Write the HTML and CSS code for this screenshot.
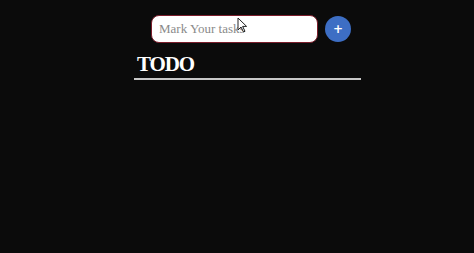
FILE: index.html
```html
<!DOCTYPE html>
<html>
<head>
<meta charset="utf-8">
<link rel="stylesheet" href="styles.css">
</head>
<body>
<div class="app">
  <form class="entry">
    <div class="field">
      <input class="task-input" type="text" placeholder="Mark Your tasks">
      <svg class="cursor" width="11" height="16" viewBox="0 0 11 16"><path d="M1 1 L1 13 L4 10 L6.5 15 L8 14.3 L5.6 9.4 L9.6 9.4 Z" fill="#fff" stroke="#222" stroke-width="1"/></svg>
    </div>
    <button class="add" type="button">+</button>
  </form>
  <div class="list">
    <h2 class="title">TODO</h2>
  </div>
</div>
</body>
</html>
```
FILE: styles.css
```css
html, body {
  margin: 0;
  padding: 0;
  background: #0b0b0b;
  height: 100%;
}
.app {
  padding-top: 15px;
  font-family: "Liberation Serif", "DejaVu Serif", serif;
}
.entry {
  display: flex;
  align-items: center;
  gap: 7px;
  margin: 0 0 0 151px;
}
.field {
  position: relative;
}
.task-input {
  box-sizing: border-box;
  width: 167px;
  height: 28px;
  border: 1px solid #7a1d2b;
  border-radius: 8px;
  background: #fff;
  padding: 0 0 0 7px;
  font-family: "Liberation Serif", "DejaVu Serif", serif;
  font-size: 13px;
  color: #222;
  outline: none;
  display: block;
}
.task-input::placeholder {
  color: #8a8a8a;
}
.cursor {
  position: absolute;
  left: 86px;
  top: 2px;
}
.add {
  width: 26px;
  height: 26px;
  border-radius: 50%;
  border: none;
  background: #3d6ec4;
  color: #fff;
  font-family: "DejaVu Sans", sans-serif;
  font-weight: bold;
  font-size: 12px;
  line-height: 26px;
  padding: 0;
  text-align: center;
}
.list {
  margin: 9px 0 0 134px;
  width: 227px;
}
.title {
  margin: 0;
  padding: 0 0 2px 3px;
  color: #fff;
  font-family: "Liberation Serif", serif;
  font-size: 21px;
  letter-spacing: -1.1px;
  line-height: 24px;
  font-weight: bold;
  border-bottom: 2px solid #c8c8c8;
}
```
